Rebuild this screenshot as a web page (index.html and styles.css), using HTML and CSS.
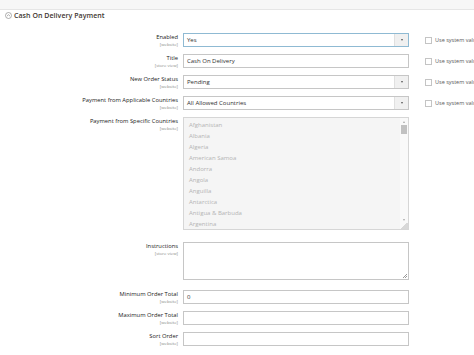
FILE: index.html
```html
<!DOCTYPE html>
<html>
<head>
<meta charset="utf-8">
<link rel="stylesheet" href="styles.css">
</head>
<body>
<div class="topbar"></div>
<div class="section-title">
  <span class="toggle"><svg width="7" height="7" viewBox="0 0 7 7"><circle cx="3.5" cy="3.5" r="3" fill="none" stroke="#8a8a8a" stroke-width="0.7"/><path d="M2 4.1 L3.5 2.7 L5 4.1" fill="none" stroke="#8a8a8a" stroke-width="0.7"/></svg></span>
  <span class="title-text">Cash On Delivery Payment</span>
</div>
<div class="form">
  <div class="row">
    <div class="label"><div class="name">Enabled</div><div class="scope">[website]</div></div>
    <div class="control"><div class="field select focus"><span class="val">Yes</span><span class="arrow"><i></i></span></div></div>
    <div class="sys"><span class="cb"></span><span class="sys-text">Use system value</span></div>
  </div>
  <div class="row">
    <div class="label"><div class="name">Title</div><div class="scope">[store view]</div></div>
    <div class="control"><div class="field"><span class="val">Cash On Delivery</span></div></div>
    <div class="sys"><span class="cb"></span><span class="sys-text">Use system value</span></div>
  </div>
  <div class="row">
    <div class="label"><div class="name">New Order Status</div><div class="scope">[website]</div></div>
    <div class="control"><div class="field select"><span class="val">Pending</span><span class="arrow"><i></i></span></div></div>
    <div class="sys"><span class="cb"></span><span class="sys-text">Use system value</span></div>
  </div>
  <div class="row">
    <div class="label"><div class="name">Payment from Applicable Countries</div><div class="scope">[website]</div></div>
    <div class="control"><div class="field select"><span class="val">All Allowed Countries</span><span class="arrow"><i></i></span></div></div>
    <div class="sys"><span class="cb"></span><span class="sys-text">Use system value</span></div>
  </div>
  <div class="row row-multi">
    <div class="label"><div class="name">Payment from Specific Countries</div><div class="scope">[website]</div></div>
    <div class="control">
      <div class="multi">
        <ul class="options">
          <li>Afghanistan</li>
          <li>Albania</li>
          <li>Algeria</li>
          <li>American Samoa</li>
          <li>Andorra</li>
          <li>Angola</li>
          <li>Anguilla</li>
          <li>Antarctica</li>
          <li>Antigua &amp; Barbuda</li>
          <li>Argentina</li>
        </ul>
        <div class="scrollbar">
          <span class="sb-btn up"></span>
          <span class="thumb"></span>
          <span class="track"></span>
          <span class="sb-btn down"></span>
          <span class="corner"></span>
        </div>
      </div>
    </div>
    <div class="sys"></div>
  </div>
  <div class="row row-text">
    <div class="label"><div class="name">Instructions</div><div class="scope">[store view]</div></div>
    <div class="control"><div class="textarea"><span class="grip"></span></div></div>
    <div class="sys"></div>
  </div>
  <div class="row">
    <div class="label"><div class="name">Minimum Order Total</div><div class="scope">[website]</div></div>
    <div class="control"><div class="field"><span class="val">0</span></div></div>
    <div class="sys"></div>
  </div>
  <div class="row">
    <div class="label"><div class="name">Maximum Order Total</div><div class="scope">[website]</div></div>
    <div class="control"><div class="field"><span class="val"></span></div></div>
    <div class="sys"></div>
  </div>
  <div class="row">
    <div class="label"><div class="name">Sort Order</div><div class="scope">[website]</div></div>
    <div class="control"><div class="field"><span class="val"></span></div></div>
    <div class="sys"></div>
  </div>
</div>
</body>
</html>
```
FILE: styles.css
```css
html, body {
  margin: 0;
  padding: 0;
  background: #ffffff;
  overflow: hidden;
}
body {
  width: 474px;
  height: 355px;
  font-family: "Open Sans", "DejaVu Sans", sans-serif;
  color: #303030;
}
.topbar {
  height: 9px;
  background: #f7f7f7;
  border-bottom: 1px solid #e6e6e6;
}
.section-title {
  display: flex;
  align-items: center;
  height: 10px;
  padding-left: 5px;
  gap: 2px;
}
.toggle {
  display: flex;
  width: 7px;
  height: 7px;
}
.title-text {
  font-size: 7px;
  font-weight: 600;
  color: #41362f;
  letter-spacing: 0.05px;
}
.form {
  padding-top: 13px;
  display: flex;
  flex-direction: column;
}
.row {
  display: grid;
  grid-template-columns: 178px 226px 60px;
  column-gap: 5px;
  margin-bottom: 7px;
}
.row .sys { margin-left: 11px; }
.label {
  text-align: right;
  padding-top: 1px;
}
.name {
  font-size: 5.8px;
  line-height: 7px;
  font-weight: 400;
  color: #1a1a1a;
  white-space: nowrap;
}
.scope {
  font-size: 4.3px;
  line-height: 6px;
  color: #8a8a8a;
}
.field {
  box-sizing: border-box;
  height: 14px;
  border: 1px solid #c6c6c6;
  background: #fff;
  display: flex;
  align-items: center;
}
.field.focus {
  border-color: #8fbad3;
}
.val {
  flex: 1;
  font-size: 6px;
  color: #303030;
  padding-left: 3px;
}
.arrow {
  width: 13px;
  height: 100%;
  border-left: 1px solid #e0e0e0;
  background: #f0f0f0;
  display: flex;
  align-items: center;
  justify-content: center;
}
.arrow i {
  width: 0;
  height: 0;
  border-left: 1.5px solid transparent;
  border-right: 1.5px solid transparent;
  border-top: 2px solid #555;
}
.sys {
  display: flex;
  align-items: center;
  gap: 3px;
  white-space: nowrap;
  height: 14px;
}
.cb {
  flex: none;
  box-sizing: border-box;
  width: 7px;
  height: 7px;
  border: 1px solid #c4c4c4;
  background: #fff;
}
.sys-text {
  font-size: 5.5px;
  color: #5a5a5a;
}
.row-multi { margin-bottom: 12px; }
.multi {
  box-sizing: border-box;
  height: 113px;
  border: 1px solid #d6d6d6;
  background: #f5f5f5;
  display: flex;
}
.options {
  list-style: none;
  margin: 0;
  padding: 2px 0 0 5px;
  flex: 1;
}
.options li {
  font-size: 6px;
  line-height: 11px;
  color: #b4b4b4;
}
.scrollbar {
  width: 8px;
  display: flex;
  flex-direction: column;
  background: #f9f9f9;
}
.sb-btn {
  height: 7px;
  position: relative;
}
.sb-btn.up::after, .sb-btn.down::after {
  content: "";
  position: absolute;
  left: 2.5px;
  top: 2.5px;
  border-left: 1.5px solid transparent;
  border-right: 1.5px solid transparent;
}
.sb-btn.up::after { border-bottom: 2px solid #a8a8a8; }
.sb-btn.down::after { border-top: 2px solid #a8a8a8; }
.thumb {
  height: 9px;
  margin: 0 1px;
  background: #c1c1c1;
}
.track { flex: 1; }
.corner {
  height: 6px;
  background: linear-gradient(135deg, transparent 50%, #d8d8d8 50%);
}
.row-text { margin-bottom: 10px; }
.textarea {
  box-sizing: border-box;
  height: 38px;
  border: 1px solid #c6c6c6;
  background: #fff;
  position: relative;
}
.grip {
  position: absolute;
  right: 1px;
  bottom: 1px;
  width: 5px;
  height: 5px;
  background: linear-gradient(135deg, transparent 55%, #9a9a9a 55%, #9a9a9a 65%, transparent 65%, transparent 78%, #9a9a9a 78%, #9a9a9a 88%, transparent 88%);
}
```
